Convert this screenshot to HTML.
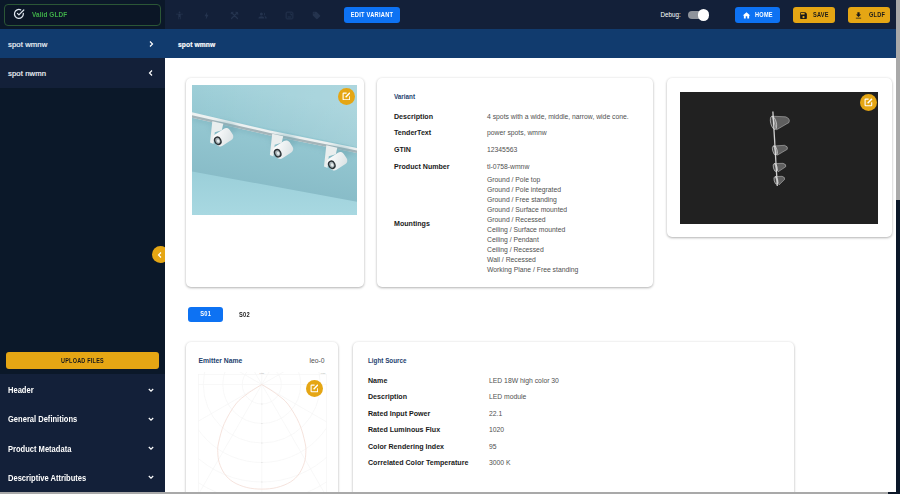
<!DOCTYPE html>
<html lang="en">
<head>
<meta charset="utf-8">
<title>GLDF Editor</title>
<style>
*{box-sizing:border-box;margin:0;padding:0}
html,body{width:900px;height:494px;overflow:hidden;background:#fff;font-family:"Liberation Sans",sans-serif;}
body{position:relative}
.abs{position:absolute}
#topbar{left:0;top:0;width:900px;height:29px;background:#132039}
#topleft{left:0;top:0;width:165px;height:29px;background:#0b1829}
#valid{left:4px;top:4px;width:157px;height:22px;border:1px solid #2b5636;border-radius:4px;background:#0b1626}
#valid span{position:absolute;left:27px;top:4.8px;font-size:7.4px;font-weight:bold;color:#3fae49;letter-spacing:.1px;transform:scaleX(.87);transform-origin:0 50%;white-space:nowrap}
#subbar{left:0;top:29px;width:900px;height:29.4px;background:#113b6e}
#side{left:0;top:58.4px;width:165px;height:436px;background:#0b1829}
#row2{left:0;top:58.4px;width:165px;height:29.4px;background:#132039}
.rowtxt{position:absolute;left:8px;font-size:7.7px;color:#eef2f7;letter-spacing:.1px;white-space:nowrap;-webkit-text-stroke:.2px #eef2f7}
#acc{left:0;top:374px;width:165px;height:120px;background:#132039}
.acci{position:absolute;left:8px;font-size:8.3px;font-weight:bold;color:#fff;white-space:nowrap;transform:scaleX(.91);transform-origin:0 50%}
#upload{left:6px;top:352px;width:153px;height:16.5px;background:#e5a614;border-radius:3px;color:#1a1a1a;font-size:7px;font-weight:bold;text-align:center;line-height:17.6px;letter-spacing:.3px}
.btn{position:absolute;top:7px;height:16px;border-radius:3px;font-size:7px;font-weight:bold;line-height:16px;letter-spacing:.3px;white-space:nowrap}
.blue{background:#0d72f3;color:#fff}
.yel{background:#e5a614;color:#1a1a1a}
.card{position:absolute;background:#fff;border-radius:5px;box-shadow:0 1px 2.5px rgba(0,0,0,.28),0 0 3px rgba(0,0,0,.07)}
.k{position:absolute;font-size:7.1px;font-weight:bold;color:#1a1a1a;white-space:nowrap}
.v{position:absolute;font-size:6.8px;color:#505050;white-space:nowrap}
.ttl{position:absolute;font-size:6.3px;font-weight:bold;color:#1d3f6e;white-space:nowrap}
.fab{position:absolute;width:17px;height:17px;border-radius:50%;background:#e5a614}
.fab svg{position:absolute;left:4.2px;top:4.2px;width:8.8px;height:8.8px}
.chev{position:absolute;left:147.2px}
.tic{position:absolute;top:10.5px}
.sx{transform:scaleX(.8);transform-origin:0 50%}
</style>
</head>
<body>
<div id="topbar" class="abs"></div>
<div id="topleft" class="abs"></div>
<div id="valid" class="abs">
<svg class="abs" style="left:8px;top:2.900px" width="11.800" height="11.800" viewBox="0 0 24 24" fill="none" stroke="#dfe6ef" stroke-width="2.500" stroke-linecap="round" stroke-linejoin="round"><path d="M21 11.1V12a9 9 0 1 1-5.3-8.2"/><path d="M22 4 12 14l-3-3"/></svg>
<span>Valid GLDF</span></div>

<!-- disabled toolbar icons -->
<svg class="tic" style="left:174.5px" width="9" height="9" viewBox="0 0 24 24" fill="#24334e"><circle cx="12" cy="4" r="2.4"/><path d="M21 9H15v13h-2v-6h-2v6H9V9H3V7h18z"/></svg>
<svg class="tic" style="left:201.5px" width="9" height="9" viewBox="0 0 24 24" fill="#24334e"><path d="M11 21h-1l1-7H7.5c-.9 0-.4-.7-.3-.8C8.500 11 10.500 7.500 13 3h1l-1 7h3.500c.5 0 .6.300.5.500C13.200 17.200 11 21 11 21z"/></svg>
<svg class="tic" style="left:229.5px" width="9" height="9" viewBox="0 0 24 24" fill="none" stroke="#24334e" stroke-width="3.2" stroke-linecap="round"><path d="M4 4l16 16M20 4L4 20M3 7l5-4M16 3l5 5"/></svg>
<svg class="tic" style="left:257.5px" width="9" height="9" viewBox="0 0 24 24" fill="#24334e"><circle cx="9" cy="8" r="4"/><path d="M1 20c0-4 4-6 8-6s8 2 8 6z"/><path d="M16.700 13.100c2.900.400 6.300 1.700 6.300 4.900v2h-4v-2c0-2-1-3.700-2.300-4.900zM15 4a4 4 0 0 1 0 8 5.500 5.500 0 0 0 0-8z"/></svg>
<svg class="tic" style="left:284.5px" width="9" height="9" viewBox="0 0 24 24" fill="none" stroke="#24334e" stroke-width="2.6"><rect x="3" y="3" width="18" height="18" rx="2"/><path d="M7 16h10M13 8h4v4"/></svg>
<svg class="tic" style="left:311.5px" width="9" height="9" viewBox="0 0 24 24" fill="#24334e"><path d="M21.400 11.600l-9-9C12 2.200 11.500 2 11 2H4c-1.100 0-2 .9-2 2v7c0 .600.200 1.100.600 1.400l9 9c.400.400.900.600 1.400.600s1-.200 1.400-.600l7-7c.400-.400.600-.900.600-1.400s-.200-1-.600-1.400zM5.500 7C4.700 7 4 6.300 4 5.500S4.700 4 5.500 4 7 4.700 7 5.500 6.300 7 5.500 7z"/></svg>

<div class="btn blue" style="left:344px;width:56px;text-align:center"><span style="display:inline-block;transform:scaleX(.815)">EDIT VARIANT</span></div>
<div class="abs" style="left:660.500px;top:11px;font-size:6.300px;color:#fff">Debug:</div>
<div class="abs" style="left:688px;top:11px;width:19px;height:8px;border-radius:4px;background:#8f949c"></div>
<div class="abs" style="left:697.500px;top:9px;width:11.500px;height:11.500px;border-radius:50%;background:#fff"></div>
<div class="btn blue" style="left:735px;width:45px"><svg class="abs" style="left:6.500px;top:3.500px" width="9" height="9" viewBox="0 0 24 24" fill="#fff"><path d="M10 20v-6h4v6h5v-8h3L12 3 2 12h3v8z"/></svg><span class="abs sx" style="left:20px">HOME</span></div>
<div class="btn yel" style="left:793px;width:42px"><svg class="abs" style="left:5.500px;top:3.500px" width="9" height="9" viewBox="0 0 24 24" fill="#1a1a1a"><path d="M17 3H5a2 2 0 0 0-2 2v14a2 2 0 0 0 2 2h14c1.100 0 2-.9 2-2V7l-4-4zm-5 16c-1.660 0-3-1.340-3-3s1.340-3 3-3 3 1.340 3 3-1.340 3-3 3zm3-10H5V5h10v4z"/></svg><span class="abs sx" style="left:19.5px">SAVE</span></div>
<div class="btn yel" style="left:848px;width:42px"><svg class="abs" style="left:5.500px;top:3.500px" width="9" height="9" viewBox="0 0 24 24" fill="#1a1a1a"><path d="M19 9h-4V3H9v6H5l7 7 7-7zM5 18v2h14v-2H5z"/></svg><span class="abs sx" style="left:20.5px">GLDF</span></div>

<div id="subbar" class="abs"></div>
<div class="rowtxt" style="top:40px">spot wmnw</div>
<svg class="chev" style="top:40px" width="8" height="8" viewBox="0 0 8 8" fill="none" stroke="#fff" stroke-width="1.200"><path d="M3 1.500 5.500 4 3 6.500"/></svg>
<div class="rowtxt" style="top:40.500px;left:178px;font-size:6.700px;font-weight:bold;color:#fff">spot wmnw</div>
<div id="side" class="abs"></div>
<div id="row2" class="abs"></div>
<div class="rowtxt" style="top:69px">spot nwmn</div>
<svg class="chev" style="top:69.3px" width="8" height="8" viewBox="0 0 8 8" fill="none" stroke="#fff" stroke-width="1.200"><path d="M5 1.500 2.500 4 5 6.500"/></svg>

<!-- collapse handle -->
<div class="abs" style="left:152px;top:246px;width:13px;height:17px;overflow:hidden"><div class="abs" style="left:0;top:0;width:17px;height:17px;border-radius:50%;background:#e5a614"></div>
<svg class="abs" style="left:4px;top:4.500px" width="8" height="8" viewBox="0 0 8 8" fill="none" stroke="#fff" stroke-width="1.200"><path d="M5 1.500 2.500 4 5 6.500"/></svg></div>

<div id="upload" class="abs"><span style="display:inline-block;transform:scaleX(.78)">UPLOAD FILES</span></div>
<div id="acc" class="abs"></div>
<div class="acci" style="top:385.2px">Header</div>
<div class="acci" style="top:414.4px">General Definitions</div>
<div class="acci" style="top:443.7px">Product Metadata</div>
<div class="acci" style="top:472.7px">Descriptive Attributes</div>
<svg class="chev" style="top:385.9px" width="8" height="8" viewBox="0 0 8 8" fill="none" stroke="#fff" stroke-width="1.200"><path d="M1.800 3 4 5.200 6.200 3"/></svg>
<svg class="chev" style="top:414.9px" width="8" height="8" viewBox="0 0 8 8" fill="none" stroke="#fff" stroke-width="1.200"><path d="M1.800 3 4 5.200 6.200 3"/></svg>
<svg class="chev" style="top:444.2px" width="8" height="8" viewBox="0 0 8 8" fill="none" stroke="#fff" stroke-width="1.200"><path d="M1.800 3 4 5.200 6.200 3"/></svg>
<svg class="chev" style="top:473.4px" width="8" height="8" viewBox="0 0 8 8" fill="none" stroke="#fff" stroke-width="1.200"><path d="M1.800 3 4 5.200 6.200 3"/></svg>

<!-- card 1: photo -->
<div class="card" style="left:186px;top:78px;width:178px;height:209px"></div>
<svg class="abs" style="left:192px;top:85px" width="165" height="130" viewBox="0 0 165 130">
<defs>
<linearGradient id="g1" gradientUnits="userSpaceOnUse" x1="45" y1="0" x2="25" y2="108"><stop offset="0" stop-color="#a0d0d9"/><stop offset=".35" stop-color="#95c8d2"/><stop offset="1" stop-color="#85b9c5"/></linearGradient><linearGradient id="g5" x1="0" y1="0" x2="1" y2="0"><stop offset="0" stop-color="#fff" stop-opacity="0"/><stop offset="1" stop-color="#fff" stop-opacity=".14"/></linearGradient>
<linearGradient id="g2" x1="0" y1="0" x2="0" y2="1"><stop offset="0" stop-color="#9bcfd9"/><stop offset="1" stop-color="#a8d8e1"/></linearGradient>
<linearGradient id="g3" x1="0" y1="0" x2="1" y2="1"><stop offset="0" stop-color="#ffffff"/><stop offset="1" stop-color="#d9e1e3"/></linearGradient>
<linearGradient id="g4" x1="0" y1="0" x2="0" y2="1"><stop offset="0" stop-color="#8cc7d2" stop-opacity="0"/><stop offset="1" stop-color="#7dbcc8" stop-opacity=".5"/></linearGradient>
<filter id="bl" x="-50%" y="-50%" width="200%" height="200%"><feGaussianBlur stdDeviation="2.500"/></filter>
</defs>
<rect width="165" height="130" fill="url(#g1)"/>
<path d="M0 0H165V62L0 27z" fill="url(#g5)"/>
<path d="M0 86.400 165 116.700V130H0z" fill="url(#g2)"/>
<path d="M0 31 78 49 165 66.500V70L78 53 0 35z" fill="#74aab6" opacity=".55" filter="url(#bl)"/>
<path d="M0 27.300 78 45.500 165 63V68L78 50.400 0 32.800z" fill="#edf1f1"/>
<path d="M0 30.300 78 48 165 65.600V68L78 50.400 0 32.800z" fill="#a3b4b9"/>
<g transform="translate(25.800 55.800)">
<ellipse cx="6" cy="-12" rx="13" ry="7" fill="#74aab6" opacity=".5" filter="url(#bl)"/>
<path d="M-5.500-19.500 5.500-17 4-10.500-3-8.500-4.300 3.200-7.800 1.800z" fill="#e9eeee"/>
<g transform="rotate(-33)"><rect x="-3" y="-6.800" width="19" height="13.600" rx="4.200" fill="url(#g3)"/></g>

<ellipse cx="0" cy="0" rx="3.700" ry="4.500" transform="rotate(-25)" fill="#2b3236"/>
<ellipse cx="0" cy="0" rx="2.300" ry="3" transform="rotate(-25)" fill="#aab4b8"/>
<ellipse cx="0.300" cy="0.300" rx="1.200" ry="1.600" transform="rotate(-25)" fill="#e8eeee"/>
</g>
<g transform="translate(85.700 68.200)">
<ellipse cx="6" cy="-12" rx="13" ry="7" fill="#74aab6" opacity=".5" filter="url(#bl)"/>
<path d="M-5.500-19.500 5.500-17 4-10.500-3-8.500-4.300 3.200-7.800 1.800z" fill="#e9eeee"/>
<g transform="rotate(-33)"><rect x="-3" y="-6.800" width="19" height="13.600" rx="4.200" fill="url(#g3)"/></g>

<ellipse cx="0" cy="0" rx="3.700" ry="4.500" transform="rotate(-25)" fill="#2b3236"/>
<ellipse cx="0" cy="0" rx="2.300" ry="3" transform="rotate(-25)" fill="#aab4b8"/>
<ellipse cx="0.300" cy="0.300" rx="1.200" ry="1.600" transform="rotate(-25)" fill="#e8eeee"/>
</g>
<g transform="translate(139.800 79.800)">
<ellipse cx="6" cy="-12" rx="13" ry="7" fill="#74aab6" opacity=".5" filter="url(#bl)"/>
<path d="M-5.500-19.500 5.500-17 4-10.500-3-8.500-4.300 3.200-7.800 1.800z" fill="#e9eeee"/>
<g transform="rotate(-33)"><rect x="-3" y="-6.800" width="19" height="13.600" rx="4.200" fill="url(#g3)"/></g>

<ellipse cx="0" cy="0" rx="3.700" ry="4.500" transform="rotate(-25)" fill="#2b3236"/>
<ellipse cx="0" cy="0" rx="2.300" ry="3" transform="rotate(-25)" fill="#aab4b8"/>
<ellipse cx="0.300" cy="0.300" rx="1.200" ry="1.600" transform="rotate(-25)" fill="#e8eeee"/>
</g>
</svg>
<div class="fab" style="left:337.500px;top:87.500px"><svg width="8" height="8" viewBox="0 0 8 8" fill="none" stroke="#fff" stroke-width="1"><path d="M4.200 1H1.500a.5.500 0 0 0-.5.500v5a.5.500 0 0 0 .5.500h5a.5.500 0 0 0 .5-.5V3.800"/><path d="M3.300 4.700 7.200.8" stroke-width="1.300"/></svg></div>

<!-- card 2: variant -->
<div class="card" style="left:377px;top:78px;width:276px;height:209px"></div>
<div class="ttl" style="left:394px;top:93px">Variant</div>
<div class="k" style="left:394px;top:112.5px">Description</div>
<div class="v" style="left:487px;top:112.500px">4 spots with a wide, middle, narrow, wide cone.</div>
<div class="k" style="left:394px;top:128.500px">TenderText</div>
<div class="v" style="left:487px;top:129px">power spots, wmnw</div>
<div class="k" style="left:394px;top:145.7px">GTIN</div>
<div class="v" style="left:487px;top:145.500px">12345563</div>
<div class="k" style="left:394px;top:162.7px">Product Number</div>
<div class="v" style="left:487px;top:162.500px">tl-0758-wmnw</div>
<div class="k" style="left:394px;top:220.3px">Mountings</div>
<div class="v" style="left:487px;top:175px;line-height:10px">Ground / Pole top<br>Ground / Pole integrated<br>Ground / Free standing<br>Ground / Surface mounted<br>Ground / Recessed<br>Ceiling / Surface mounted<br>Ceiling / Pendant<br>Ceiling / Recessed<br>Wall / Recessed<br>Working Plane / Free standing</div>

<!-- card 3: 3D -->
<div class="card" style="left:667px;top:78px;width:225px;height:159px"></div>
<svg class="abs" style="left:680px;top:92px" width="198" height="132" viewBox="680 92 198 132">
<rect x="680" y="92" width="198" height="132" fill="#212121"/>
<g fill="#c4c4c4" fill-opacity=".38" stroke="#dcdcdc" stroke-opacity=".75" stroke-width=".6" stroke-linejoin="round">
<path d="M772.900 111.500 777.300 186" fill="none" stroke="#cfcfcf" stroke-width="1.300" stroke-opacity="1"/>
<path d="M772 116.200 785.500 116.800Q790.500 118.500 789 122.500L776.500 129.800Z"/>
<ellipse cx="773.500" cy="122.800" rx="2.800" ry="6.800" transform="rotate(-14 773.500 122.800)" fill="#ffffff" fill-opacity=".18" stroke="#f0f0f0" stroke-opacity=".9"/>
<path d="M773.500 146 784.500 145.300Q788.500 146.500 787.300 149.300L777.300 155.200Z"/>
<ellipse cx="774.900" cy="150.400" rx="2.200" ry="4.700" transform="rotate(-14 774.900 150.400)" fill="#ffffff" fill-opacity=".18" stroke="#f0f0f0" stroke-opacity=".9"/>
<path d="M774.300 163.600 783 163.300Q786.800 164.300 785.700 166.800L778.100 171.800Z"/>
<ellipse cx="775.300" cy="167.500" rx="1.900" ry="4.100" transform="rotate(-14 775.300 167.500)" fill="#ffffff" fill-opacity=".18" stroke="#f0f0f0" stroke-opacity=".9"/>
<path d="M775 176.600 782 176.300Q785.500 177.200 784.500 179.600L779 184.900Z"/>
<ellipse cx="776" cy="180.400" rx="1.800" ry="3.900" transform="rotate(-14 776 180.400)" fill="#ffffff" fill-opacity=".18" stroke="#f0f0f0" stroke-opacity=".9"/>
</g>
</svg>
<div class="fab" style="left:860px;top:94px"><svg width="8" height="8" viewBox="0 0 8 8" fill="none" stroke="#fff" stroke-width="1"><path d="M4.200 1H1.500a.5.500 0 0 0-.5.500v5a.5.500 0 0 0 .5.500h5a.5.500 0 0 0 .5-.5V3.800"/><path d="M3.300 4.700 7.200.8" stroke-width="1.300"/></svg></div>

<!-- tabs -->
<div class="btn blue" style="left:188.200px;top:307.200px;width:35px;height:14.800px;line-height:14.800px;text-align:center"><span style="display:inline-block;transform:scaleX(.82)">S01</span></div>
<div class="abs" style="left:239px;top:310.600px;font-size:7px;font-weight:bold;color:#222;letter-spacing:.3px;transform:scaleX(.82);transform-origin:0 50%">S02</div>

<!-- card 4: emitter -->
<div class="card" style="left:186px;top:342px;width:152px;height:170px"></div>
<div class="ttl" style="left:198.5px;top:356.8px;font-size:6.8px">Emitter Name</div>
<div class="v" style="left:309.5px;top:356.8px">leo-0</div>
<svg class="abs" style="left:198px;top:372px" width="129" height="122" viewBox="0 0 129 122">
<g fill="none" stroke="#f5f5f5" stroke-width="0.7">
<circle cx="63.8" cy="12.5" r="19.5"/>
<circle cx="63.8" cy="12.5" r="39.0"/>
<circle cx="63.8" cy="12.5" r="58.5"/>
<circle cx="63.8" cy="12.5" r="78.0"/>
<circle cx="63.8" cy="12.5" r="97.5"/>
<circle cx="63.8" cy="12.5" r="117.0"/>
<circle cx="63.8" cy="12.5" r="136.5"/>
<circle cx="63.8" cy="12.5" r="156.0"/>
<line x1="63.8" y1="12.5" x2="63.8" y2="212.5"/>
<line x1="63.8" y1="12.5" x2="163.8" y2="185.7"/>
<line x1="63.8" y1="12.5" x2="237.0" y2="112.5"/>
<line x1="63.8" y1="12.5" x2="263.8" y2="12.5"/>
<line x1="63.8" y1="12.5" x2="237.0" y2="-87.5"/>
<line x1="63.8" y1="12.5" x2="163.8" y2="-160.7"/>
<line x1="63.8" y1="12.5" x2="63.8" y2="-187.5"/>
<line x1="63.8" y1="12.5" x2="-36.2" y2="-160.7"/>
<line x1="63.8" y1="12.5" x2="-109.4" y2="-87.5"/>
<line x1="63.8" y1="12.5" x2="-136.2" y2="12.5"/>
<line x1="63.8" y1="12.5" x2="-109.4" y2="112.5"/>
<line x1="63.8" y1="12.5" x2="-36.2" y2="185.7"/>
<rect x="0.4" y="2.4" width="128.2" height="122"/>
</g>
<path d="M63.8 12.5 C66.1 14.0 73.5 18.2 77.8 21.5 C82.1 24.8 85.9 27.0 89.8 32.0 C93.7 37.0 98.4 45.0 101.3 51.5 C104.2 58.0 106.0 66.2 107.1 71.0 C108.2 75.8 107.9 77.2 107.8 80.5 C107.7 83.8 107.5 87.0 106.4 90.5 C105.3 94.0 103.6 98.2 101.3 101.5 C99.0 104.8 96.2 107.7 92.4 110.0 C88.7 112.3 83.6 114.3 78.8 115.5 C74.0 116.7 68.8 117.1 63.8 117.1 C58.8 117.1 53.6 116.7 48.8 115.5 C44.0 114.3 39.0 112.3 35.2 110.0 C31.5 107.7 28.6 104.8 26.3 101.5 C24.0 98.2 22.3 94.0 21.2 90.5 C20.1 87.0 19.9 83.8 19.8 80.5 C19.7 77.2 19.4 75.8 20.5 71.0 C21.6 66.2 23.4 58.0 26.3 51.5 C29.2 45.0 33.9 37.0 37.8 32.0 C41.7 27.0 45.5 24.8 49.8 21.5 C54.1 18.2 61.5 14.0 63.8 12.5" fill="none" stroke="#f2dcd4" stroke-width="0.8"/>
<rect x="63.0" y="31.7" width="1.6" height="0.6" fill="#dcdcdc"/>
<rect x="63.0" y="51.2" width="1.6" height="0.6" fill="#dcdcdc"/>
<rect x="63.0" y="70.7" width="1.6" height="0.6" fill="#dcdcdc"/>
<rect x="63.0" y="90.2" width="1.6" height="0.6" fill="#dcdcdc"/>
<rect x="63.0" y="109.7" width="1.6" height="0.6" fill="#dcdcdc"/>
<text x="63.8" y="1.6" font-size="1.8" fill="#999" text-anchor="middle" font-family="Liberation Sans, sans-serif">0.000</text>
<text x="125" y="1.6" font-size="1.8" fill="#999" text-anchor="middle" font-family="Liberation Sans, sans-serif">0.000</text>
</svg>
<div class="fab" style="left:305.500px;top:380px"><svg width="8" height="8" viewBox="0 0 8 8" fill="none" stroke="#fff" stroke-width="1"><path d="M4.200 1H1.500a.5.500 0 0 0-.5.500v5a.5.500 0 0 0 .5.500h5a.5.500 0 0 0 .5-.5V3.800"/><path d="M3.300 4.700 7.200.8" stroke-width="1.300"/></svg></div>

<!-- card 5: light source -->
<div class="card" style="left:353px;top:342px;width:441px;height:170px"></div>
<div class="ttl" style="left:368px;top:356.500px">Light Source</div>
<div class="k" style="left:368px;top:376.5px">Name</div>
<div class="v" style="left:489px;top:376.500px">LED 18W high color 30</div>
<div class="k" style="left:368px;top:392.500px">Description</div>
<div class="v" style="left:489px;top:393px">LED module</div>
<div class="k" style="left:368px;top:409.5px">Rated Input Power</div>
<div class="v" style="left:489px;top:409.500px">22.1</div>
<div class="k" style="left:368px;top:426px">Rated Luminous Flux</div>
<div class="v" style="left:489px;top:426px">1020</div>
<div class="k" style="left:368px;top:442.5px">Color Rendering Index</div>
<div class="v" style="left:489px;top:442.500px">95</div>
<div class="k" style="left:368px;top:459px">Correlated Color Temperature</div>
<div class="v" style="left:489px;top:459px">3000 K</div>

<!-- scrollbars -->
<div class="abs" style="left:896.200px;top:0;width:3.800px;height:494px;background:#0b1829"></div>
<div class="abs" style="left:896.200px;top:0;width:3.800px;height:199.500px;background:#a9a9a9"></div>
<div class="abs" style="left:0;top:491.5px;width:900px;height:2.5px;background:#0d1829"></div>
<div class="abs" style="left:0;top:491.5px;width:888px;height:2.5px;background:#a9a9a9"></div>
</body>
</html>
